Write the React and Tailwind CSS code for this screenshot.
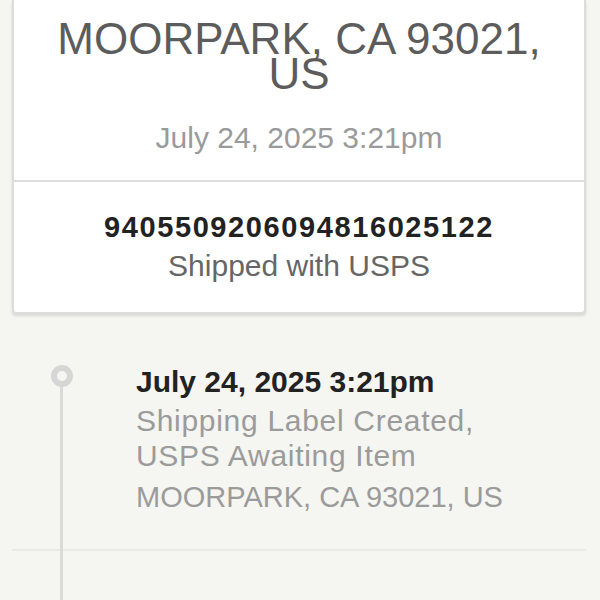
export default function App() {
  const font = { fontFamily: '"Liberation Sans", Arial, sans-serif' };

  return (
    <div className="w-[600px] h-[600px] overflow-hidden bg-[#f5f5f1] flex flex-col" style={font}>
      {/* shipment card */}
      <div className="ml-[12px] mr-[14px] bg-white border-2 border-t-0 border-[#dcdcdc] rounded-b-[4px] shadow-[0_2px_3px_rgba(0,0,0,0.12)]">
        <div className="pt-[21px] pb-[26px] px-4 text-center">
          <p className="text-[44px] leading-[35px] text-[#5c5c5c]">
            MOORPARK, CA 93021,
            <br />
            US
          </p>
          <p className="mt-[31px] text-[30px] leading-[32px] text-[#9a9a9a]">July 24, 2025 3:21pm</p>
        </div>
        <div className="border-t-2 border-[#dcdcdc] pt-[28px] pb-[28px] text-center">
          <p className="text-[29px] leading-[34px] font-bold tracking-[1.6px] text-[#222]">9405509206094816025122</p>
          <p className="mt-[4px] text-[30px] leading-[36px] text-[#666]">Shipped with USPS</p>
        </div>
      </div>

      {/* tracking timeline */}
      <div className="relative flex-1 mt-[50px]">
        <div className="absolute left-[60px] top-[22px] bottom-0 w-[3px] bg-[#dadada]" />
        <div className="ml-[12px] mr-[14px] border-b-2 border-[#e9e9e5] flex pb-[34px]">
          <div className="w-[124px] shrink-0 pl-[39px] pt-[1px]">
            <div className="relative w-[22px] h-[22px] rounded-full border-[6px] border-[#d6d6d6] bg-[#f5f5f1]" />
          </div>
          <div className="min-w-0">
            <p className="text-[30px] leading-[36px] font-bold text-[#222]">July 24, 2025 3:21pm</p>
            <p className="mt-[3px] text-[30px] leading-[35px] tracking-[0.7px] text-[#9b9b9b]">
              Shipping Label Created,
              <br />
              USPS Awaiting Item
            </p>
            <p className="mt-[7px] text-[29px] leading-[35px] text-[#9b9b9b]">MOORPARK, CA 93021, US</p>
          </div>
        </div>
      </div>
    </div>
  );
}
